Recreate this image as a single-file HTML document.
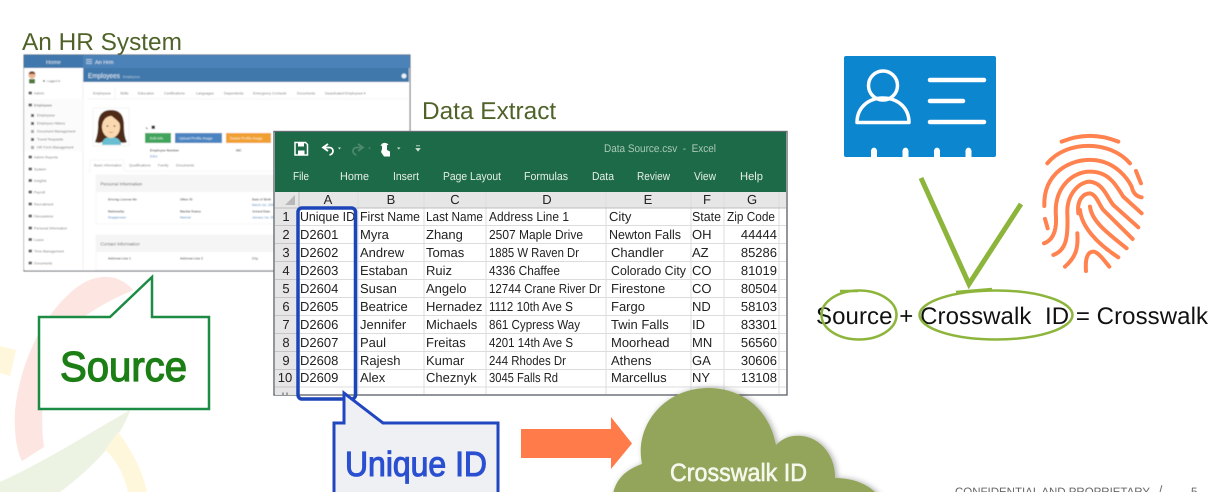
<!DOCTYPE html>
<html><head><meta charset="utf-8"><style>
html,body{margin:0;padding:0;background:#fff;width:1229px;height:492px;overflow:hidden}
svg{display:block;font-family:"Liberation Sans",sans-serif;text-rendering:geometricPrecision}
.s text{font-size:3.6px;fill:#777}
.x text{font-size:13px;fill:#222}
.f text{font-size:11.5px;fill:#e4eee8}
</style></head><body>
<svg width="1229" height="492" viewBox="0 0 1229 492" xmlns="http://www.w3.org/2000/svg">
<defs>
<filter id="b" x="-2%" y="-2%" width="104%" height="104%"><feGaussianBlur stdDeviation="0.4"/></filter>
<filter id="b2" x="-2%" y="-2%" width="104%" height="104%"><feGaussianBlur stdDeviation="0.25"/></filter>
<filter id="sh" x="-10%" y="-10%" width="120%" height="120%"><feDropShadow dx="2" dy="0" stdDeviation="3" flood-color="#000" flood-opacity=".3"/></filter>
</defs>
<!-- faint logo -->
<path d="M133,290 C118,272 92,272 70,293 C40,320 20,365 15,410 C14,430 16,450 22,461 L44,447 C40,420 42,385 55,350 C68,322 100,305 133,290Z" fill="#fde5e1"/>
<path d="M0,482 C40,464 85,436 130,410 C122,438 90,470 60,492 L0,492Z" fill="#edf3e2"/>
<path d="M0,346 L16,350 L10,376 L0,373Z" fill="#fff7dc"/>
<path d="M118,432 C132,450 143,472 147,492 L128,492 C124,474 115,458 105,450Z" fill="#fff7dc"/>

<text x="22" y="50" font-size="24.4" fill="#4f6228">An HR System</text>
<text x="422" y="119" font-size="24.4" fill="#4f6228">Data Extract</text>

<!-- HR screenshot -->
<g filter="url(#b)">
<rect x="24" y="55" width="386" height="216" fill="#fff" stroke="#5a6068" stroke-width="1"/>
<rect x="24" y="55" width="386" height="13" fill="#4b82b8"/>
<rect x="24" y="55" width="59" height="13" fill="#3f78ad"/>
<rect x="83" y="68" width="326" height="14" fill="#3f78ab"/>
<text x="46" y="64" font-size="5.5" fill="#dfe9f3">Home</text>
<path d="M86,59.5h6M86,61.5h6M86,63.5h6" stroke="#cfe0ef" stroke-width=".8"/>
<text x="95" y="64" font-size="5.5" fill="#e6eef6">An  Hrm</text>
<text x="88" y="78" font-size="7" fill="#e8f0f7" textLength="32" lengthAdjust="spacingAndGlyphs">Employees</text>
<text x="123" y="78" font-size="3.4" fill="#bcd2e5">Employees</text>
<circle cx="404" cy="76" r="2.5" fill="#e8f0f7"/>
<path d="M24,68h59v202H24z" fill="#fff"/>
<line x1="83" y1="68" x2="83" y2="270" stroke="#e4e6e8" stroke-width=".6"/>
<circle cx="32" cy="75" r="3.6" fill="#e8b48f"/><path d="M28.5,74a3.6,3.6 0 0 1 7,0z" fill="#7b4a25"/><rect x="29" y="79" width="6" height="4.5" fill="#4f7a3c"/>
<circle cx="44" cy="81" r=".9" fill="#355"/><text x="47" y="82" font-size="3" fill="#666">Logged In</text>
<rect x="24" y="99" width="59" height="52" fill="#fbfbfb"/>
<g class="s">
<text x="34" y="94.5">Admin</text><text x="34" y="106.5" style="fill:#555">Employees</text>
<text x="37" y="116.5">Employees</text><text x="37" y="124.5">Employee History</text><text x="37" y="132.5">Document Management</text><text x="37" y="140.5">Travel Requests</text><text x="37" y="148.5">HR Form Management</text>
<text x="34" y="158.5">Admin Reports</text><text x="34" y="170.5">System</text><text x="34" y="182">Insights</text><text x="34" y="193.5">Payroll</text><text x="34" y="205.5">Recruitment</text><text x="34" y="217.5">Discussions</text><text x="34" y="229.5">Personal Information</text><text x="34" y="241">Leave</text><text x="34" y="252.5">Time Management</text><text x="34" y="264.5">Documents</text>
</g>
<g fill="#666">
<rect x="28.5" y="91.5" width="3.5" height="3"/><rect x="28.5" y="103.5" width="3.5" height="3"/><rect x="31" y="114" width="3" height="3"/><rect x="31" y="122" width="3" height="3"/><rect x="31" y="130" width="3" height="3" fill="#aaa"/><rect x="31" y="138" width="3" height="3"/><rect x="31" y="146" width="3" height="3" fill="#aaa"/>
<rect x="28.5" y="155.5" width="3.5" height="3"/><rect x="28.5" y="167.5" width="3.5" height="3"/><rect x="28.5" y="179" width="3.5" height="3"/><rect x="28.5" y="190.5" width="3.5" height="3"/><rect x="28.5" y="202.5" width="3.5" height="3"/><rect x="28.5" y="214.5" width="3.5" height="3"/><rect x="28.5" y="226.5" width="3.5" height="3"/><rect x="28.5" y="238" width="3.5" height="3"/><rect x="28.5" y="249.5" width="3.5" height="3"/><rect x="28.5" y="261.5" width="3.5" height="3"/>
</g>
<g class="s">
<text x="93" y="94.5">Employees</text><text x="120" y="94.5">Skills</text><text x="138" y="94.5">Education</text><text x="164" y="94.5">Certifications</text><text x="196" y="94.5">Languages</text><text x="224" y="94.5">Dependents</text><text x="253" y="94.5">Emergency Contacts</text><text x="297" y="94.5">Documents</text><text x="325" y="94.5">Deactivated Employees ▾</text>
</g>
<path d="M88,99H115V87" fill="none" stroke="#e8e8e8" stroke-width=".5"/><path d="M115,99H409" stroke="#eee" stroke-width=".5"/>
<rect x="93" y="108" width="36" height="38" fill="#fff" stroke="#efefef" stroke-width=".6"/>
<path d="M111,110 C100,110 98,118 98,126 C98,134 96,139 95,142 C100,144 104,142 106,138 L116,138 C118,142 122,144 127,142 C125,138 124,134 124,126 C124,118 122,110 111,110Z" fill="#4f2b16"/>
<path d="M102,145 C102,139 106,137 111,137 C116,137 121,139 121,145Z" fill="#69bfd1"/>
<ellipse cx="111" cy="127" rx="9" ry="11" fill="#fbd9b0"/>
<path d="M102,124 C102,117 106,114 110,114 C113,118 118,120 120,124 C121,116 118,111 111,111 C104,111 101,117 102,124Z" fill="#4f2b16"/>
<circle cx="107.5" cy="126" r=".8" fill="#333"/><circle cx="114.5" cy="126" r=".8" fill="#333"/><path d="M109,132q2,1 4,0" stroke="#c05a50" stroke-width=".6" fill="none"/>
<path d="M146,127.5l1.5,1.5M152,126h2.5v2.5h-2.5z" stroke="#333" stroke-width=".8" fill="#333"/>
<rect x="145" y="133" width="26" height="10" fill="#3fa45b"/>
<rect x="175" y="133" width="47" height="10" fill="#4b84c0"/>
<rect x="226" y="133" width="45" height="10" fill="#f0a030"/>
<text x="150" y="139.5" font-size="3.6" fill="#e6f4ea">Edit Info</text>
<text x="179" y="139.5" font-size="3.6" fill="#e6f0fa">Upload Profile Image</text>
<text x="230" y="139.5" font-size="3.6" fill="#fff3dc">Delete Profile Image</text>
<text x="150" y="151.5" font-size="3.3" font-weight="bold" fill="#666">Employee Number</text>
<text x="150" y="157.5" font-size="3.3" fill="#4b84c0">E001</text>
<text x="236" y="151.5" font-size="3.3" font-weight="bold" fill="#666">NIC</text>
<g class="s"><text x="94" y="166.5">Basic Information</text><text x="129" y="166.5">Qualifications</text><text x="158" y="166.5">Family</text><text x="176" y="166.5">Documents</text></g>
<path d="M87,171H90V160H124V171H275" fill="none" stroke="#eee" stroke-width=".5"/>
<rect x="96" y="175" width="180" height="49" fill="#fff" stroke="#eee" stroke-width=".5"/>
<rect x="96" y="175" width="180" height="17" fill="#f5f5f5"/>
<text x="100.5" y="185.5" font-size="4.5" fill="#666">Personal Information</text>
<g font-size="3.2" font-weight="bold" fill="#666"><text x="108" y="200.5">Driving License No</text><text x="180" y="200.5">Other ID</text><text x="252" y="200.5">Date of Birth</text><text x="108" y="212.5">Nationality</text><text x="180" y="212.5">Marital Status</text><text x="252" y="212.5">Joined Date</text></g>
<g font-size="3.2" fill="#4b84c0"><text x="252" y="206">March 1st, 1990</text><text x="108" y="218.5">Singaporean</text><text x="180" y="218.5">Married</text><text x="252" y="218.5">January 1st, 2018</text></g>
<rect x="96" y="235" width="180" height="35" fill="#fff" stroke="#eee" stroke-width=".5"/>
<rect x="96" y="235" width="180" height="17" fill="#f5f5f5"/>
<text x="100.5" y="245.5" font-size="4.5" fill="#666">Contact Information</text>
<g font-size="3.2" font-weight="bold" fill="#666"><text x="108" y="259.5">Address Line 1</text><text x="180" y="259.5">Address Line 2</text><text x="252" y="259.5">City</text></g>
</g>

<!-- Source callout -->
<path d="M39,317H110L152,277V317H209V409H39Z" fill="#fff" stroke="#1c8c44" stroke-width="2.5"/>
<text x="60" y="381" font-size="42" fill="#1f7f14" stroke="#1f7f14" stroke-width="1.3" textLength="127" lengthAdjust="spacingAndGlyphs" filter="url(#b2)">Source</text>

<!-- Excel -->
<g filter="url(#b2)">
<rect x="274" y="131.5" width="513" height="263.5" fill="#fff" stroke="#656b72" stroke-width="1.4"/>
<rect x="275" y="132" width="511" height="60" fill="#1f6b47"/>
<path d="M295,142.5h10.5l2,2v10.5h-12.5z" fill="none" stroke="#fff" stroke-width="1.5"/><rect x="298" y="143" width="6" height="3.5" fill="#fff"/><rect x="298" y="150.5" width="6.5" height="4" fill="#fff"/>
<path d="M328,144l-5,3.5l5,3.5M323,147.5h6c3,0 4,2 4,3.5s-1,3.5-3.5,4" fill="none" stroke="#fff" stroke-width="1.8"/>
<path d="M338,147.5l3,0l-1.5,2z" fill="#d4e3da"/>
<path d="M358,144l5,3.5l-5,3.5M363,147.5h-6c-3,0-4,2-4,3.5s1,3.5 3.5,4" fill="none" stroke="#4d8a6c" stroke-width="1.8"/>
<path d="M368,147.5l3,0l-1.5,2z" fill="#4d8a6c"/>
<path d="M385,143c-2,0-3,1.5-3,3v3l-1,3l3,4.5h6v-5l-3-1.5v-4c0-1.5-.5-3-2-3z" fill="#fff"/><path d="M381,146a4,4 0 0 1 7,-1" stroke="#fff" fill="none"/>
<path d="M397,147.5l3.5,0l-1.75,2z" fill="#d4e3da"/>
<path d="M416,145.8h4M416,148.5l2,2.5l2,-2.5z" fill="#d4e3da" stroke="#d4e3da" stroke-width=".8"/>
<text x="604" y="152" font-size="11" fill="#abc9b9" textLength="112" lengthAdjust="spacingAndGlyphs" xml:space="preserve">Data Source.csv  -  Excel</text>
<g class="f">
<text x="293" y="180" textLength="16" lengthAdjust="spacingAndGlyphs">File</text><text x="340" y="180" textLength="29" lengthAdjust="spacingAndGlyphs">Home</text><text x="393" y="180" textLength="26" lengthAdjust="spacingAndGlyphs">Insert</text><text x="443" y="180" textLength="58" lengthAdjust="spacingAndGlyphs">Page Layout</text><text x="524" y="180" textLength="44" lengthAdjust="spacingAndGlyphs">Formulas</text><text x="592" y="180" textLength="22" lengthAdjust="spacingAndGlyphs">Data</text><text x="637" y="180" textLength="33" lengthAdjust="spacingAndGlyphs">Review</text><text x="694" y="180" textLength="22" lengthAdjust="spacingAndGlyphs">View</text><text x="740" y="180" textLength="23" lengthAdjust="spacingAndGlyphs">Help</text>
</g>
<rect x="275" y="192" width="511" height="16" fill="#e6e6e6"/>
<rect x="275" y="192" width="24" height="203" fill="#e6e6e6"/>
<path d="M295,195v10h-10z" fill="#b8b8b8"/>
<path d="M299,225.5H786M299,243.5H786M299,261.5H786M299,279.5H786M299,297.5H786M299,315.5H786M299,333.5H786M299,351.5H786M299,369.5H786M299,387H786" stroke="#dcdcdc" stroke-width="1"/>
<path d="M358,192V394M424,192V394M486,192V394M606,192V394M691,192V394M724,192V394M779,192V394" stroke="#dcdcdc" stroke-width="1"/>
<path d="M275,225.5H299M275,243.5H299M275,261.5H299M275,279.5H299M275,297.5H299M275,315.5H299M275,333.5H299M275,351.5H299M275,369.5H299M275,387H299" stroke="#c6c6c6" stroke-width="1"/>
<path d="M275,208H786" stroke="#bdbdbd" stroke-width="1"/><path d="M299,192V395" stroke="#bdbdbd" stroke-width="1"/>
<g class="x" text-anchor="middle" style="font-size:12.5px">
<text x="328" y="204">A</text><text x="391" y="204">B</text><text x="455" y="204">C</text><text x="547" y="204">D</text><text x="648" y="204">E</text><text x="707" y="204">F</text><text x="752" y="204">G</text>
<text x="286" y="221">1</text><text x="286" y="239">2</text><text x="286" y="257">3</text><text x="286" y="275">4</text><text x="286" y="293">5</text><text x="286" y="311">6</text><text x="286" y="329">7</text><text x="286" y="347">8</text><text x="286" y="365">9</text><text x="285" y="382">10</text>
</g>
<path d="M283,392.5v2.5M287,392.5v2.5" stroke="#555" stroke-width="1"/>
<g class="x">
<text x="300" y="221" textLength="55" lengthAdjust="spacingAndGlyphs">Unique ID</text><text x="360" y="221" textLength="60" lengthAdjust="spacingAndGlyphs">First Name</text><text x="426" y="221" textLength="57" lengthAdjust="spacingAndGlyphs">Last Name</text><text x="489" y="221" textLength="80" lengthAdjust="spacingAndGlyphs">Address Line 1</text><text x="609" y="221">City</text><text x="692" y="221" textLength="29" lengthAdjust="spacingAndGlyphs">State</text><text x="727" y="221" textLength="48" lengthAdjust="spacingAndGlyphs">Zip Code</text>
<text x="300" y="239">D2601</text><text x="360" y="239">Myra</text><text x="426" y="239">Zhang</text><text x="489" y="239" textLength="94" lengthAdjust="spacingAndGlyphs">2507 Maple Drive</text><text x="609" y="239" textLength="72" lengthAdjust="spacingAndGlyphs">Newton Falls</text><text x="692" y="239">OH</text><text x="777" y="239" text-anchor="end">44444</text>
<text x="300" y="257">D2602</text><text x="360" y="257">Andrew</text><text x="426" y="257">Tomas</text><text x="489" y="257" textLength="90" lengthAdjust="spacingAndGlyphs">1885 W Raven Dr</text><text x="611" y="257">Chandler</text><text x="692" y="257">AZ</text><text x="777" y="257" text-anchor="end">85286</text>
<text x="300" y="275">D2603</text><text x="360" y="275">Estaban</text><text x="426" y="275">Ruiz</text><text x="489" y="275" textLength="71" lengthAdjust="spacingAndGlyphs">4336 Chaffee</text><text x="611" y="275" textLength="75" lengthAdjust="spacingAndGlyphs">Colorado City</text><text x="692" y="275">CO</text><text x="777" y="275" text-anchor="end">81019</text>
<text x="300" y="293">D2604</text><text x="360" y="293">Susan</text><text x="426" y="293">Angelo</text><text x="489" y="293" textLength="112" lengthAdjust="spacingAndGlyphs">12744 Crane River Dr</text><text x="611" y="293">Firestone</text><text x="692" y="293">CO</text><text x="777" y="293" text-anchor="end">80504</text>
<text x="300" y="311">D2605</text><text x="360" y="311">Beatrice</text><text x="426" y="311">Hernadez</text><text x="489" y="311" textLength="84" lengthAdjust="spacingAndGlyphs">1112 10th Ave S</text><text x="611" y="311">Fargo</text><text x="692" y="311">ND</text><text x="777" y="311" text-anchor="end">58103</text>
<text x="300" y="329">D2606</text><text x="360" y="329">Jennifer</text><text x="426" y="329">Michaels</text><text x="489" y="329" textLength="91" lengthAdjust="spacingAndGlyphs">861 Cypress Way</text><text x="611" y="329">Twin Falls</text><text x="692" y="329">ID</text><text x="777" y="329" text-anchor="end">83301</text>
<text x="300" y="347">D2607</text><text x="360" y="347">Paul</text><text x="426" y="347">Freitas</text><text x="489" y="347" textLength="84" lengthAdjust="spacingAndGlyphs">4201 14th Ave S</text><text x="611" y="347">Moorhead</text><text x="692" y="347">MN</text><text x="777" y="347" text-anchor="end">56560</text>
<text x="300" y="365">D2608</text><text x="360" y="365">Rajesh</text><text x="426" y="365">Kumar</text><text x="489" y="365" textLength="77" lengthAdjust="spacingAndGlyphs">244 Rhodes Dr</text><text x="611" y="365">Athens</text><text x="692" y="365">GA</text><text x="777" y="365" text-anchor="end">30606</text>
<text x="300" y="382">D2609</text><text x="360" y="382">Alex</text><text x="426" y="382">Cheznyk</text><text x="489" y="382" textLength="69" lengthAdjust="spacingAndGlyphs">3045 Falls Rd</text><text x="611" y="382">Marcellus</text><text x="692" y="382">NY</text><text x="777" y="382" text-anchor="end">13108</text>
</g>
<rect x="298" y="208" width="57.5" height="191" rx="4" fill="none" stroke="#1f45b8" stroke-width="3.5"/>
</g>

<!-- Unique ID callout -->
<path d="M334,423H344V393L383,423H498V500H334Z" fill="#eef0f3" stroke="#2146c0" stroke-width="3"/>
<text x="345" y="476" font-size="35" fill="#2a50d0" stroke="#2a50d0" stroke-width="1.1" textLength="142" lengthAdjust="spacingAndGlyphs" filter="url(#b2)">Unique ID</text>

<!-- Arrow -->
<path d="M521,429H611V417L632,443.5L611,469V458H521Z" fill="#ff7b4a"/>

<!-- Cloud -->
<path d="M612,500C614,480 625,470 642,464C634,425 665,388 708,388C745,388 770,412 776,445C784,437 792,435 802,436C822,438 836,458 835,478C858,478 875,488 881,500Z" fill="#92a55a" filter="url(#sh)"/>
<text x="670" y="481" font-size="25" fill="#f6f8ee" stroke="#f6f8ee" stroke-width=".6" textLength="137" lengthAdjust="spacingAndGlyphs" filter="url(#b2)">Crosswalk ID</text>

<!-- Card -->
<g filter="url(#b2)">
<path d="M846,56H994a2,2 0 0 1 2,2V155a2,2 0 0 1-2,2H971.5V152a4,4 0 0 0-1-3.5a2.8,2.8 0 0 0-4,0a4,4 0 0 0-1,3.5V157H940V152a4,4 0 0 0-1-3.5a2.8,2.8 0 0 0-4,0a4,4 0 0 0-1,3.5V157H908.5V152a4,4 0 0 0-1-3.5a2.8,2.8 0 0 0-4,0a4,4 0 0 0-1,3.5V157H877V152a4,4 0 0 0-1-3.5a2.8,2.8 0 0 0-4,0a4,4 0 0 0-1,3.5V157H846a2,2 0 0 1-2-2V58a2,2 0 0 1 2-2Z" fill="#0a86d0"/>
<circle cx="883" cy="85.5" r="14.5" fill="none" stroke="#fff" stroke-width="3.5"/>
<path d="M857,122.5C857,108 868,98 883,98C898,98 909,108 909,122.5Z" fill="none" stroke="#fff" stroke-width="3.5" stroke-linejoin="round"/>
<path d="M930,80H984M930,101H963M930,122H984" stroke="#fff" stroke-width="4.5" stroke-linecap="round"/>
</g>

<!-- Fingerprint -->
<g transform="translate(810,40) scale(.3333)" fill="none" stroke="#ff8250" stroke-width="12" stroke-linecap="round" filter="url(#b2)">
<path d="M755,305Q840,270 925,305"/>
<path d="M712,370C770,300 900,300 960,370"/>
<path d="M978,393L993,430"/>
<path d="M703,498C700,400 780,355 850,360C920,365 955,420 965,440C970,462 982,470 995,472"/>
<path d="M705,537L713,565"/>
<path d="M702,610C730,600 740,570 738,530C730,440 790,395 840,395C900,395 920,440 940,470L995,520"/>
<path d="M730,645C770,630 775,590 772,520C770,460 810,425 840,425C880,430 890,470 910,495L985,562"/>
<path d="M765,680C800,650 805,620 802,580"/>
<path d="M805,520C800,480 820,460 840,460C860,465 865,490 880,510L968,597"/>
<path d="M840,500C845,540 880,570 950,625"/>
<path d="M810,510C815,560 860,610 925,652"/>
<path d="M828,693C825,650 835,635 850,635C865,635 885,665 898,680"/>
</g>

<!-- Formula -->
<path d="M921,178L969,284L1021,204" fill="none" stroke="#8db53c" stroke-width="5"/>
<text x="816" y="324" font-size="24" fill="#111" textLength="392" lengthAdjust="spacing" xml:space="preserve">Source + Crosswalk  ID = Crosswalk</text>
<ellipse cx="859" cy="315" rx="37.5" ry="24.5" fill="none" stroke="#8db53c" stroke-width="2.5"/>
<path d="M840,291H858" stroke="#8db53c" stroke-width="2.5"/>
<ellipse cx="996" cy="315" rx="76.5" ry="24.5" fill="none" stroke="#8db53c" stroke-width="2.5"/>
<path d="M956,292L992,289" stroke="#8db53c" stroke-width="2.5"/>

<!-- Footer -->
<text x="955" y="495.5" font-size="11.5" fill="#666" textLength="195" lengthAdjust="spacing">CONFIDENTIAL AND PROPRIETARY</text>
<text x="1159" y="494" font-size="12" fill="#666">/</text>
<text x="1191" y="495.5" font-size="11.5" fill="#666">5</text>
</svg>
</body></html>
